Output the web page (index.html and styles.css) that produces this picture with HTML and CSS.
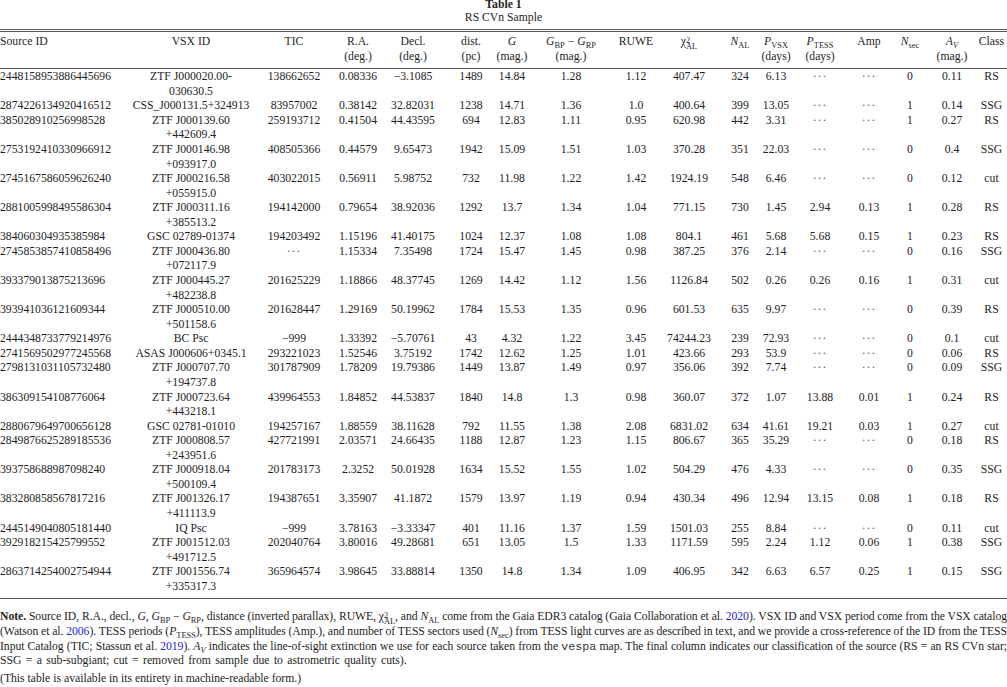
FILE: index.html
```html
<!DOCTYPE html>
<html lang="en">
<head>
<meta charset="utf-8">
<title>Table 1 – RS CVn Sample</title>
<link rel="stylesheet" href="styles.css">
</head>
<body>
<div class="page">
  <div class="caption">
    <div class="caption-label">Table 1</div>
    <div class="caption-title">RS CVn Sample</div>
  </div>
  <table class="data">
    <colgroup>
      <col class="w-src"><col class="w-vsx"><col class="w-tic"><col class="w-ra"><col class="w-dec"><col class="w-dist"><col class="w-g"><col class="w-bprp"><col class="w-ruwe"><col class="w-chi"><col class="w-nal"><col class="w-pvsx"><col class="w-ptess"><col class="w-amp"><col class="w-nsec"><col class="w-av"><col class="w-class">
    </colgroup>
    <thead>
      <tr>
        <th class="l">Source ID</th>
        <th>VSX ID</th>
        <th>TIC</th>
        <th>R.A.<br>(deg.)</th>
        <th>Decl.<br>(deg.)</th>
        <th>dist.<br>(pc)</th>
        <th><i>G</i><br>(mag.)</th>
        <th><i>G</i><sub>BP</sub> − <i>G</i><sub>RP</sub><br>(mag.)</th>
        <th>RUWE</th>
        <th><span class="chi">χ</span><span class="ss"><span class="ss-up">2</span><span class="ss-dn">AL</span></span></th>
        <th><i>N</i><sub>AL</sub></th>
        <th><i>P</i><sub>VSX</sub><br>(days)</th>
        <th><i>P</i><sub>TESS</sub><br>(days)</th>
        <th>Amp</th>
        <th><i>N</i><sub>sec</sub></th>
        <th><i>A</i><sub><i>V</i></sub><br>(mag.)</th>
        <th>Class</th>
      </tr>
    </thead>
    <tbody>
      <tr><td class="l">2448158953886445696</td><td>ZTF J000020.00-<wbr>030630.5</td><td>138662652</td><td>0.08336</td><td>−3.1085</td><td>1489</td><td>14.84</td><td>1.28</td><td>1.12</td><td>407.47</td><td>324</td><td>6.13</td><td class="dots">···</td><td class="dots">···</td><td>0</td><td>0.11</td><td>RS</td></tr>
      <tr><td class="l">2874226134920416512</td><td>CSS_J000131.5+324913</td><td>83957002</td><td>0.38142</td><td>32.82031</td><td>1238</td><td>14.71</td><td>1.36</td><td>1.0</td><td>400.64</td><td>399</td><td>13.05</td><td class="dots">···</td><td class="dots">···</td><td>1</td><td>0.14</td><td>SSG</td></tr>
      <tr><td class="l">385028910256998528</td><td>ZTF J000139.60 +442609.4</td><td>259193712</td><td>0.41504</td><td>44.43595</td><td>694</td><td>12.83</td><td>1.11</td><td>0.95</td><td>620.98</td><td>442</td><td>3.31</td><td class="dots">···</td><td class="dots">···</td><td>1</td><td>0.27</td><td>RS</td></tr>
      <tr><td class="l">2753192410330966912</td><td>ZTF J000146.98 +093917.0</td><td>408505366</td><td>0.44579</td><td>9.65473</td><td>1942</td><td>15.09</td><td>1.51</td><td>1.03</td><td>370.28</td><td>351</td><td>22.03</td><td class="dots">···</td><td class="dots">···</td><td>0</td><td>0.4</td><td>SSG</td></tr>
      <tr><td class="l">2745167586059626240</td><td>ZTF J000216.58 +055915.0</td><td>403022015</td><td>0.56911</td><td>5.98752</td><td>732</td><td>11.98</td><td>1.22</td><td>1.42</td><td>1924.19</td><td>548</td><td>6.46</td><td class="dots">···</td><td class="dots">···</td><td>0</td><td>0.12</td><td>cut</td></tr>
      <tr><td class="l">2881005998495586304</td><td>ZTF J000311.16 +385513.2</td><td>194142000</td><td>0.79654</td><td>38.92036</td><td>1292</td><td>13.7</td><td>1.34</td><td>1.04</td><td>771.15</td><td>730</td><td>1.45</td><td>2.94</td><td>0.13</td><td>1</td><td>0.28</td><td>RS</td></tr>
      <tr><td class="l">384060304935385984</td><td>GSC 02789-01374</td><td>194203492</td><td>1.15196</td><td>41.40175</td><td>1024</td><td>12.37</td><td>1.08</td><td>1.08</td><td>804.1</td><td>461</td><td>5.68</td><td>5.68</td><td>0.15</td><td>1</td><td>0.23</td><td>RS</td></tr>
      <tr><td class="l">2745853857410858496</td><td>ZTF J000436.80 +072117.9</td><td class="dots">···</td><td>1.15334</td><td>7.35498</td><td>1724</td><td>15.47</td><td>1.45</td><td>0.98</td><td>387.25</td><td>376</td><td>2.14</td><td class="dots">···</td><td class="dots">···</td><td>0</td><td>0.16</td><td>SSG</td></tr>
      <tr><td class="l">393379013875213696</td><td>ZTF J000445.27 +482238.8</td><td>201625229</td><td>1.18866</td><td>48.37745</td><td>1269</td><td>14.42</td><td>1.12</td><td>1.56</td><td>1126.84</td><td>502</td><td>0.26</td><td>0.26</td><td>0.16</td><td>1</td><td>0.31</td><td>cut</td></tr>
      <tr><td class="l">393941036121609344</td><td>ZTF J000510.00 +501158.6</td><td>201628447</td><td>1.29169</td><td>50.19962</td><td>1784</td><td>15.53</td><td>1.35</td><td>0.96</td><td>601.53</td><td>635</td><td>9.97</td><td class="dots">···</td><td class="dots">···</td><td>0</td><td>0.39</td><td>RS</td></tr>
      <tr><td class="l">2444348733779214976</td><td>BC Psc</td><td>−999</td><td>1.33392</td><td>−5.70761</td><td>43</td><td>4.32</td><td>1.22</td><td>3.45</td><td>74244.23</td><td>239</td><td>72.93</td><td class="dots">···</td><td class="dots">···</td><td>0</td><td>0.1</td><td>cut</td></tr>
      <tr><td class="l">2741569502977245568</td><td>ASAS J000606+0345.1</td><td>293221023</td><td>1.52546</td><td>3.75192</td><td>1742</td><td>12.62</td><td>1.25</td><td>1.01</td><td>423.66</td><td>293</td><td>53.9</td><td class="dots">···</td><td class="dots">···</td><td>0</td><td>0.06</td><td>RS</td></tr>
      <tr><td class="l">2798131031105732480</td><td>ZTF J000707.70 +194737.8</td><td>301787909</td><td>1.78209</td><td>19.79386</td><td>1449</td><td>13.87</td><td>1.49</td><td>0.97</td><td>356.06</td><td>392</td><td>7.74</td><td class="dots">···</td><td class="dots">···</td><td>0</td><td>0.09</td><td>SSG</td></tr>
      <tr><td class="l">386309154108776064</td><td>ZTF J000723.64 +443218.1</td><td>439964553</td><td>1.84852</td><td>44.53837</td><td>1840</td><td>14.8</td><td>1.3</td><td>0.98</td><td>360.07</td><td>372</td><td>1.07</td><td>13.88</td><td>0.01</td><td>1</td><td>0.24</td><td>RS</td></tr>
      <tr><td class="l">2880679649700656128</td><td>GSC 02781-01010</td><td>194257167</td><td>1.88559</td><td>38.11628</td><td>792</td><td>11.55</td><td>1.38</td><td>2.08</td><td>6831.02</td><td>634</td><td>41.61</td><td>19.21</td><td>0.03</td><td>1</td><td>0.27</td><td>cut</td></tr>
      <tr><td class="l">2849876625289185536</td><td>ZTF J000808.57 +243951.6</td><td>427721991</td><td>2.03571</td><td>24.66435</td><td>1188</td><td>12.87</td><td>1.23</td><td>1.15</td><td>806.67</td><td>365</td><td>35.29</td><td class="dots">···</td><td class="dots">···</td><td>0</td><td>0.18</td><td>RS</td></tr>
      <tr><td class="l">393758688987098240</td><td>ZTF J000918.04 +500109.4</td><td>201783173</td><td>2.3252</td><td>50.01928</td><td>1634</td><td>15.52</td><td>1.55</td><td>1.02</td><td>504.29</td><td>476</td><td>4.33</td><td class="dots">···</td><td class="dots">···</td><td>0</td><td>0.35</td><td>SSG</td></tr>
      <tr><td class="l">383280858567817216</td><td>ZTF J001326.17 +411113.9</td><td>194387651</td><td>3.35907</td><td>41.1872</td><td>1579</td><td>13.97</td><td>1.19</td><td>0.94</td><td>430.34</td><td>496</td><td>12.94</td><td>13.15</td><td>0.08</td><td>1</td><td>0.18</td><td>RS</td></tr>
      <tr><td class="l">2445149040805181440</td><td>IQ Psc</td><td>−999</td><td>3.78163</td><td>−3.33347</td><td>401</td><td>11.16</td><td>1.37</td><td>1.59</td><td>1501.03</td><td>255</td><td>8.84</td><td class="dots">···</td><td class="dots">···</td><td>0</td><td>0.11</td><td>cut</td></tr>
      <tr><td class="l">392918215425799552</td><td>ZTF J001512.03 +491712.5</td><td>202040764</td><td>3.80016</td><td>49.28681</td><td>651</td><td>13.05</td><td>1.5</td><td>1.33</td><td>1171.59</td><td>595</td><td>2.24</td><td>1.12</td><td>0.06</td><td>1</td><td>0.38</td><td>SSG</td></tr>
      <tr><td class="l">2863714254002754944</td><td>ZTF J001556.74 +335317.3</td><td>365964574</td><td>3.98645</td><td>33.88814</td><td>1350</td><td>14.8</td><td>1.34</td><td>1.09</td><td>406.95</td><td>342</td><td>6.63</td><td>6.57</td><td>0.25</td><td>1</td><td>0.15</td><td>SSG</td></tr>
    </tbody>
  </table>
  <p class="note">
    <span class="ln"><b>Note.</b> Source ID, R.A., decl., <i>G</i>, <i>G</i><sub>BP</sub> − <i>G</i><sub>RP</sub>, distance (inverted parallax), RUWE, <span class="chi">χ</span><span class="ss"><span class="ss-up">2</span><span class="ss-dn">AL</span></span>, and <i>N</i><sub>AL</sub> come from the Gaia EDR3 catalog (Gaia Collaboration et al. <a href="#">2020</a>). VSX ID and VSX period come from the VSX catalog</span>
    <span class="ln">(Watson et al. <a href="#">2006</a>). TESS periods (<i>P</i><sub>TESS</sub>), TESS amplitudes (Amp.), and number of TESS sectors used (<i>N</i><sub>sec</sub>) from TESS light curves are as described in text, and we provide a cross-reference of the ID from the TESS</span>
    <span class="ln">Input Catalog (TIC; Stassun et al. <a href="#">2019</a>). <i>A</i><sub><i>V</i></sub> indicates the line-of-sight extinction we use for each source taken from the <code>vespa</code> map. The final column indicates our classification of the source (RS = an RS CVn star;</span>
    <span class="ln ln-last">SSG = a sub-subgiant; cut = removed from sample due to astrometric quality cuts).</span>
  </p>
  <p class="avail">(This table is available in its entirety in machine-readable form.)</p>
</div>
</body>
</html>
```

FILE: styles.css
```css
html, body {
  margin: 0;
  padding: 0;
  background: #ffffff;
}

body {
  font-family: "Liberation Serif", "Times New Roman", serif;
  font-size: 11.7px;
  line-height: 14.56px;
  color: #1e1e1e;
  overflow: hidden;
}

.page {
  width: 1007px;
}

.caption {
  text-align: center;
  line-height: 12.5px;
  margin-top: -1px;
}

.caption-label {
  font-weight: bold;
}

table.data {
  width: 1007px;
  table-layout: fixed;
  border-collapse: collapse;
  margin-top: 5px;
  border-top: 3px double #555555;
  border-bottom: 1px solid #555555;
}

.w-src { width: 130px; }
.w-vsx { width: 122px; }
.w-tic { width: 84px; }
.w-ra { width: 44px; }
.w-dec { width: 66px; }
.w-dist { width: 50px; }
.w-g { width: 32px; }
.w-bprp { width: 86px; }
.w-ruwe { width: 44px; }
.w-chi { width: 62px; }
.w-nal { width: 40px; }
.w-pvsx { width: 32px; }
.w-ptess { width: 56px; }
.w-amp { width: 42px; }
.w-nsec { width: 40px; }
.w-av { width: 44px; }
.w-class { width: 35px; }

th, td {
  padding: 0;
  text-align: center;
  vertical-align: top;
  font-weight: normal;
}

th.l, td.l {
  text-align: left;
}

thead th {
  padding-top: 3px;
  padding-bottom: 4px;
  border-bottom: 1px solid #555555;
}

tbody tr:first-child td {
  padding-top: 1px;
}

tbody tr:last-child td {
  padding-bottom: 4px;
}

td.dots {
  color: #555555;
  letter-spacing: 1px;
}

sub {
  font-size: 0.72em;
  line-height: 0;
  vertical-align: -0.3em;
}

.chi {
  font-style: normal;
}

.ss {
  display: inline-block;
  vertical-align: -0.45em;
  line-height: 0.7em;
  font-size: 0.72em;
  text-align: left;
}

.ss-up,
.ss-dn {
  display: block;
}

.note {
  margin: 11px 0 0 0;
}

.note .ln {
  display: block;
  text-align: justify;
  text-align-last: justify;
  word-spacing: -2px;
  letter-spacing: -0.05px;
}

.note .ln-last {
  text-align: left;
  text-align-last: auto;
  word-spacing: 1.4px;
  letter-spacing: 0;
}

.note a {
  color: #2424d8;
  text-decoration: none;
}

.note code {
  font-family: "Liberation Mono", "Courier New", monospace;
  font-size: 11.7px;
  color: #333333;
  letter-spacing: 0;
}

.avail {
  margin: 3px 0 0 0;
}
```
